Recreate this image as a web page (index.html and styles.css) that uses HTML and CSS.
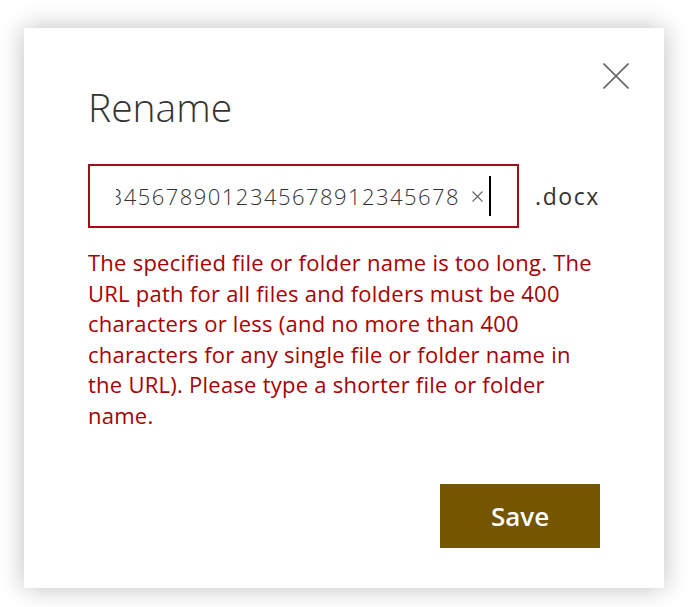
FILE: index.html
```html
<!DOCTYPE html>
<html lang="en">
<head>
<meta charset="utf-8">
<title>Rename</title>
<link rel="stylesheet" href="styles.css">
</head>
<body>
<div class="dialog" role="dialog" aria-labelledby="dlg-title">
  <div class="header">
    <h1 class="title" id="dlg-title">Rename</h1>
    <button class="close" aria-label="Close">
      <svg width="26" height="26" viewBox="0 0 26 26" aria-hidden="true"><path d="M0.5 0.5 L25.5 25.5 M25.5 0.5 L0.5 25.5" stroke="#666" stroke-width="1.6" fill="none"/></svg>
    </button>
  </div>
  <div class="name-row">
    <div class="field">
      <div class="value"><span>23456789012345678912345678</span></div>
      <span class="clear" aria-label="Clear">
        <svg width="11" height="11" viewBox="0 0 11 11" aria-hidden="true"><path d="M0.5 0.5 L10.5 10.5 M10.5 0.5 L0.5 10.5" stroke="#666" stroke-width="1.1" fill="none"/></svg>
      </span>
      <span class="caret"></span>
    </div>
    <span class="ext">.docx</span>
  </div>
  <p class="error">The specified file or folder name is too long. The URL path for all files and folders must be 400 characters or less (and no more than 400 characters for any single file or folder name in the URL). Please type a shorter file or folder name.</p>
  <div class="footer">
    <button class="save">Save</button>
  </div>
</div>
</body>
</html>
```

FILE: styles.css
```css
html, body {
  margin: 0;
  padding: 0;
  background: #ffffff;
}

body {
  font-family: "Open Sans", "Noto Sans", sans-serif;
  color: #333333;
  padding: 28px 0 19px 24px;
}

.dialog {
  box-sizing: border-box;
  width: 640px;
  height: 560px;
  background: #ffffff;
  box-shadow: 0 0 24px rgba(0, 0, 0, 0.26);
  padding: 0 64px 40px 64px;
  display: flex;
  flex-direction: column;
}

.header {
  display: flex;
  justify-content: space-between;
  align-items: flex-start;
  padding-top: 35px;
}

.title {
  margin: 20px 0 0 0;
  font-weight: 300;
  font-size: 39px;
  line-height: 48px;
  color: #333333;
}

.close {
  margin: 0 -29px 0 0;
  padding: 0;
  border: 0;
  background: transparent;
  width: 26px;
  height: 26px;
  display: flex;
  cursor: pointer;
}

.name-row {
  display: flex;
  align-items: center;
  margin-top: 33px;
}

.field {
  box-sizing: border-box;
  width: 431px;
  height: 64px;
  border: 2px solid #a00d12;
  display: flex;
  align-items: center;
  padding: 0 26px 0 26px;
}

.value {
  flex: 1;
  min-width: 0;
  overflow: hidden;
  display: flex;
  justify-content: flex-end;
  white-space: nowrap;
  font-weight: 300;
  font-size: 22px;
  letter-spacing: 1.45px;
  color: #333333;
}

.clear {
  display: flex;
  margin-left: 12px;
}

.caret {
  width: 2px;
  height: 40px;
  background: #000000;
  margin-left: 6px;
}

.ext {
  margin-left: 16px;
  font-size: 23px;
  letter-spacing: 1.6px;
  color: #333333;
}

.error {
  margin: 19px 0 0 0;
  font-size: 22px;
  line-height: 30.6px;
  letter-spacing: 0.25px;
  color: #a80000;
}

.footer {
  margin-top: auto;
  display: flex;
  justify-content: flex-end;
}

.save {
  width: 160px;
  height: 64px;
  border: 0;
  background: #745500;
  color: #ffffff;
  font-family: "Open Sans", "Noto Sans", sans-serif;
  font-weight: 600;
  font-size: 26px;
  padding: 0;
  cursor: pointer;
}
```
